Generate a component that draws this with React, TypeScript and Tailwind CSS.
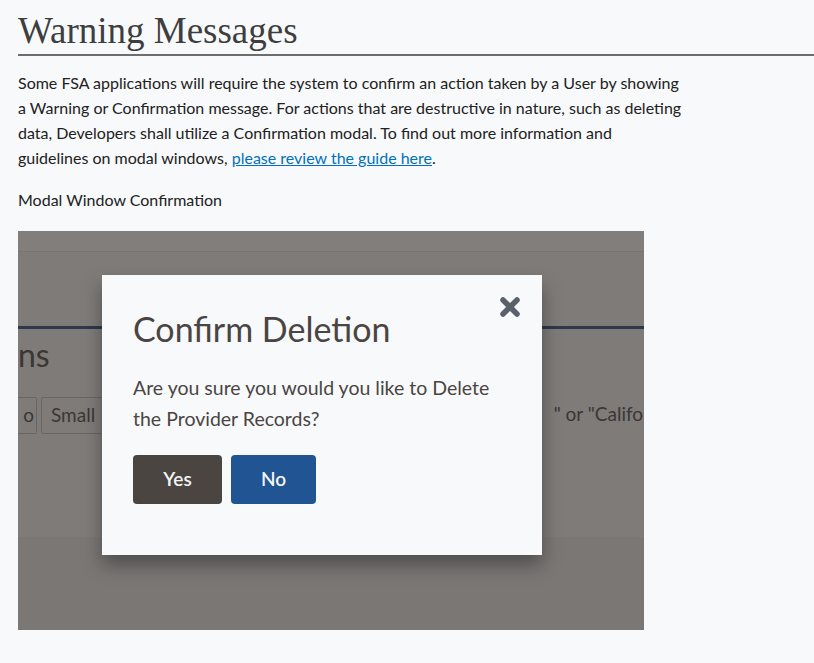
import React from 'react'

const sans = { fontFamily: '"Source Sans Pro", Lato, "Open Sans", sans-serif' }

function CloseIcon() {
  return (
    <svg width="22" height="22" viewBox="0 0 22 22" aria-hidden="true">
      <path d="M4 4 L18 18 M18 4 L4 18" stroke="#5b616b" strokeWidth="5.5" strokeLinecap="round" />
    </svg>
  )
}

function ConfirmModal() {
  return (
    <div className="absolute left-[84px] top-[44px] w-[440px] h-[280px] bg-[#f8f9fb] shadow-[0_10px_18px_rgba(0,0,0,0.35)] pl-[31px] pr-[21px] pt-[21px]">
      <div className="flex justify-end">
        <button className="w-[22px] h-[22px]">
          <CloseIcon />
        </button>
      </div>
      <h3 className="text-[34px] leading-[40px] text-[#4a4543] -mt-[9px]">Confirm Deletion</h3>
      <p className="mt-[23px] text-[19.5px] leading-[31px] text-[#4a4543] w-[380px]">
        Are you sure you would you like to Delete the Provider Records?
      </p>
      <div className="mt-[21px] flex gap-[9px]">
        <button className="w-[89px] h-[49px] rounded-[4px] bg-[#4a4541] text-[#f4f4f4] text-[19px] font-semibold">Yes</button>
        <button className="w-[85px] h-[49px] rounded-[4px] bg-[#205493] text-[#f4f4f4] text-[19px] font-semibold">No</button>
      </div>
    </div>
  )
}

function ModalPreview() {
  return (
    <div className="relative w-[626px] h-[399px] bg-[#7e7b79] overflow-hidden">
      <div className="h-[21px] bg-[#817e7c] border-b border-[#777472]" />
      <div className="mt-[74px] h-[3px] bg-[#2d3a4b]" />
      <div className="mt-[8px] text-[32px] leading-[36px] text-[#3a3735]">ns</div>
      <div className="mt-[24px] flex items-center">
        <div className="flex gap-[4px] text-[19px] text-[#3a3735]">
          <span className="h-[37px] w-[19px] border border-[#686563] border-l-0 rounded-r-[2px] flex items-center justify-end pr-[2px] overflow-hidden">o</span>
          <span className="h-[37px] px-[9px] border border-[#686563] rounded-[2px] flex items-center">Small</span>
        </div>
        <span className="ml-auto whitespace-nowrap text-[19px] text-[#3a3735] -mr-[6px] -mt-[2px]">&quot; or &quot;Califor</span>
      </div>
      <div className="mt-[103px] h-full bg-[#7a7775]" />
      <ConfirmModal />
    </div>
  )
}

export default function App() {
  return (
    <div className="min-h-screen bg-[#f8f9fb] text-[#212121]" style={sans}>
      <div className="pl-[18px] pt-[9px]">
        <h2
          className="text-[37px] leading-[43px] text-[#3e3e3e] border-b-2 border-[#6d6d6d] pb-[2px]"
          style={{ fontFamily: '"Liberation Serif", "DejaVu Serif", serif' }}
        >
          Warning Messages
        </h2>
        <p className="mt-[14px] w-[668px] text-[16px] leading-[25px]">
          Some FSA applications will require the system to confirm an action taken by a User by showing a Warning or
          Confirmation message. For actions that are destructive in nature, such as deleting data, Developers shall
          utilize a Confirmation modal. To find out more information and guidelines on modal windows,{' '}
          <a href="#" className="text-[#0071bc] underline">please review the guide here</a>.
        </p>
        <p className="mt-[17px] text-[16px] leading-[25px]">Modal Window Confirmation</p>
        <div className="mt-[19px]">
          <ModalPreview />
        </div>
      </div>
    </div>
  )
}
